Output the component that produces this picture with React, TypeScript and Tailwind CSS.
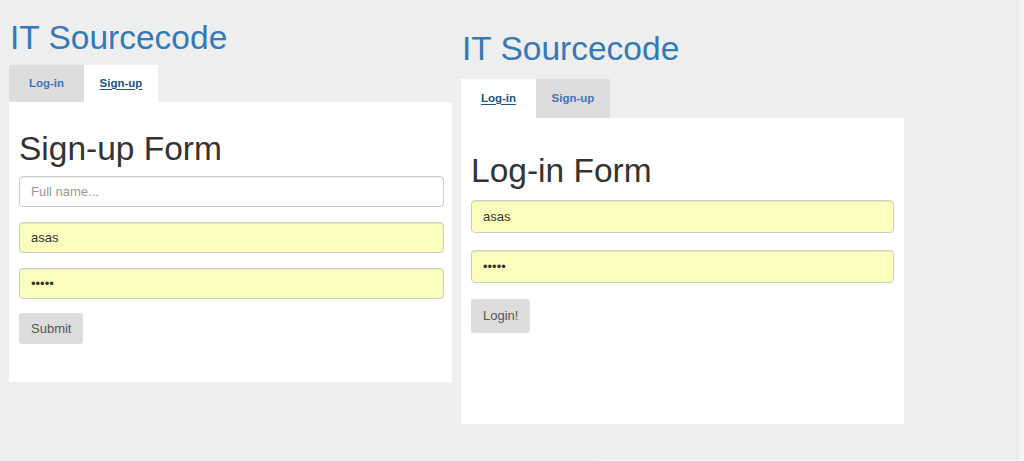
import React from 'react'

const font = { fontFamily: '"Liberation Sans", Arial, sans-serif' }

type TabProps = { label: string; active: boolean; w: string }

const Tab = ({ label, active, w }: TabProps) => (
  <div
    className={`flex h-full items-center justify-center text-[11.5px] font-bold ${w} ${
      active ? 'bg-white text-[#23527c] underline underline-offset-2' : 'bg-[#dddddd] text-[#3a78b5]'
    }`}
  >
    {label}
  </div>
)

const Field = ({
  placeholder,
  value,
  type = 'text',
  filled,
  h,
}: {
  placeholder?: string
  value?: string
  type?: string
  filled?: boolean
  h: string
}) => (
  <input
    readOnly
    type={type}
    placeholder={placeholder}
    value={value ?? ''}
    className={`block w-full rounded-[4px] border border-[#cccccc] pl-[11px] pr-3 text-[13px] text-[#333] shadow-[inset_0_1px_1px_rgba(0,0,0,0.075)] outline-none placeholder:text-[#999] ${h} ${
      filled ? 'bg-[#faffbd]' : 'bg-white'
    }`}
    style={font}
  />
)

function SignupColumn() {
  return (
    <div className="flex w-[443px] flex-col pt-[19px]">
      <h1 className="pl-px text-[33.5px] leading-[38px] text-[#337ab7]">IT Sourcecode</h1>
      <div className="mt-2 flex h-[37px]">
        <Tab label="Log-in" active={false} w="w-[75px]" />
        <Tab label="Sign-up" active w="w-[74px]" />
      </div>
      <div className="flex h-[280px] flex-col bg-white pl-[10px] pr-[8px] pt-[28px]">
        <h2 className="text-[33.5px] leading-[38px] text-[#333]">Sign-up Form</h2>
        <div className="mt-2 flex flex-col gap-[15px]">
          <Field placeholder="Full name..." h="h-[31px]" />
          <Field value="asas" filled h="h-[31px]" />
          <Field value="asasa" type="password" filled h="h-[31px]" />
        </div>
        <div className="mt-[14px]">
          <button className="h-[31px] rounded-[3px] bg-[#dddddd] px-3 text-[13px] text-[#555]">Submit</button>
        </div>
      </div>
    </div>
  )
}

function LoginColumn() {
  return (
    <div className="flex w-[443px] flex-col pt-[30px]">
      <h1 className="pl-px text-[33.5px] leading-[38px] text-[#337ab7]">IT Sourcecode</h1>
      <div className="mt-[11px] flex h-[39px]">
        <Tab label="Log-in" active w="w-[75px]" />
        <Tab label="Sign-up" active={false} w="w-[74px]" />
      </div>
      <div className="flex h-[306px] flex-col bg-white pl-[10px] pr-[10px] pt-[33px]">
        <h2 className="text-[33.5px] leading-[40px] text-[#333]">Log-in Form</h2>
        <div className="mt-[9px] flex flex-col gap-[17px]">
          <Field value="asas" filled h="h-[33px]" />
          <Field value="asasa" type="password" filled h="h-[33px]" />
        </div>
        <div className="mt-[16px]">
          <button className="h-[34px] rounded-[3px] bg-[#dddddd] px-3 text-[13px] text-[#555]">Login!</button>
        </div>
      </div>
    </div>
  )
}

export default function App() {
  return (
    <div className="flex h-[461px] w-full flex-col bg-[#eeeeee]" style={font}>
      <div className="flex h-[460px]">
        <div className="flex flex-1 gap-[9px] pl-[9px]">
          <SignupColumn />
          <LoginColumn />
        </div>
        <div className="w-[7px] border-l border-[#e2e2e2] bg-[#f4f4f4]" />
      </div>
      <div className="flex h-px">
        <div className="w-[595px]" />
        <div className="flex-1 bg-[#f7f7f7]" />
      </div>
    </div>
  )
}
